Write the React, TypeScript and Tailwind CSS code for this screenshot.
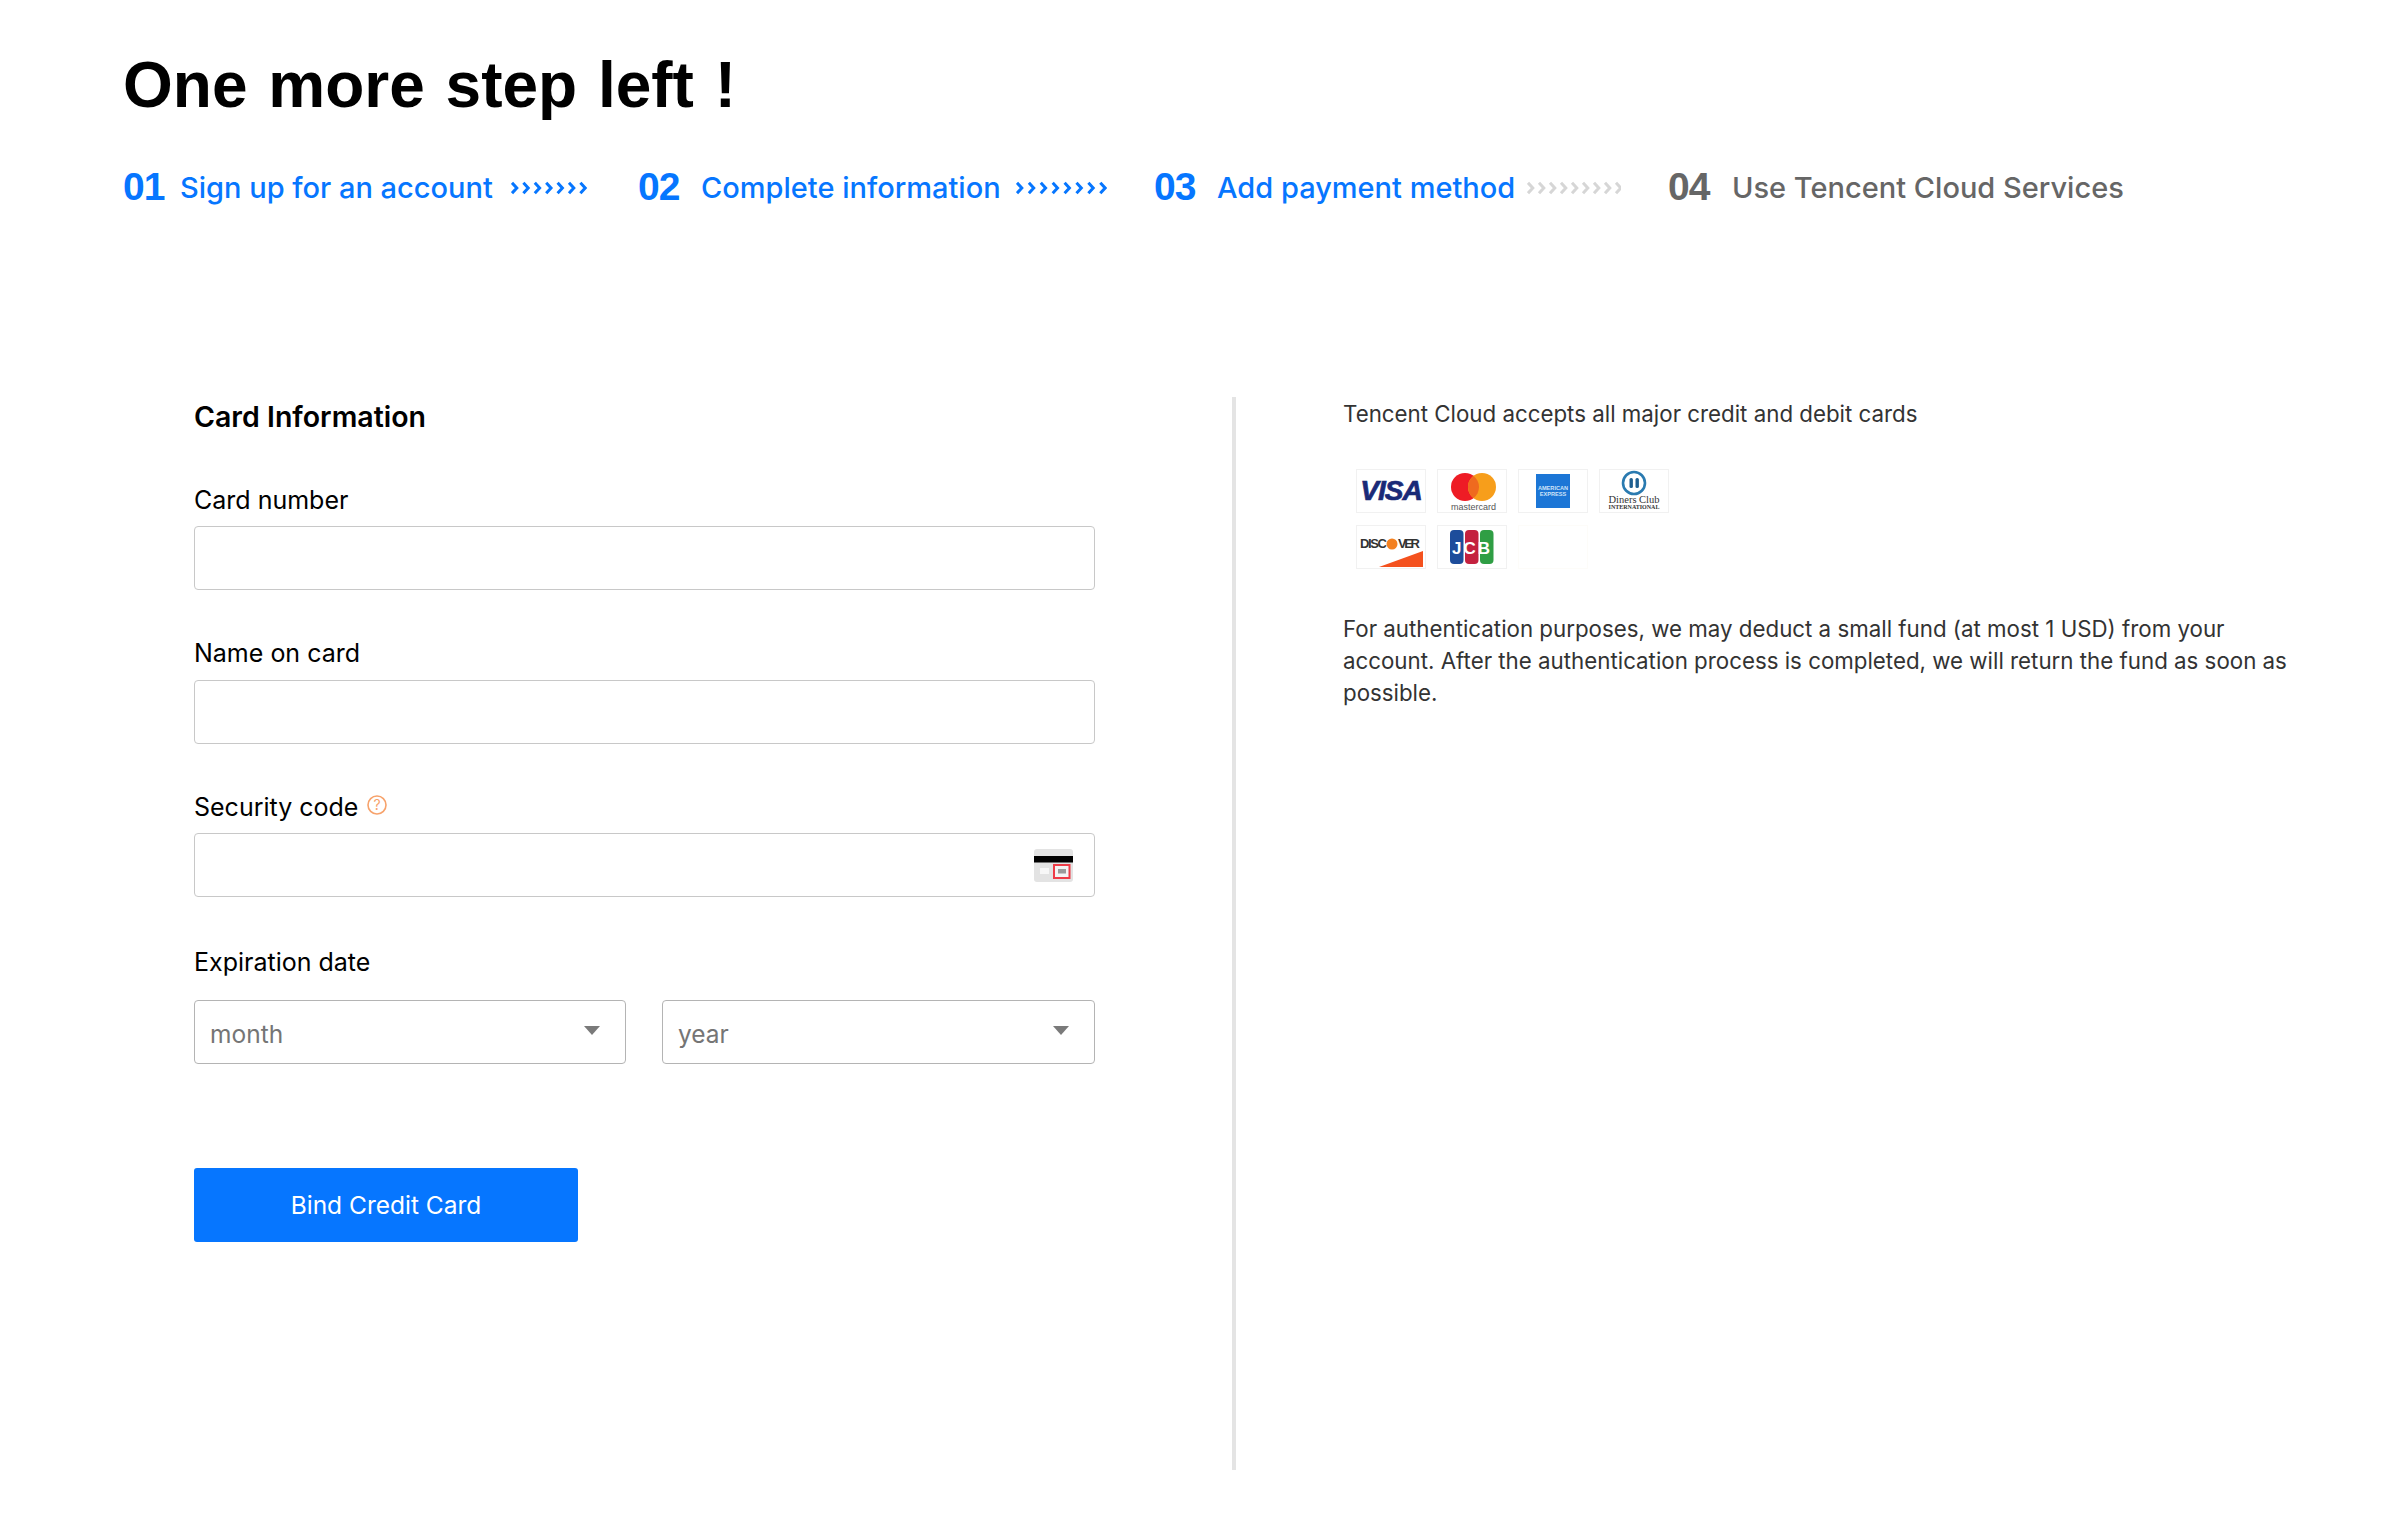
const sans = "font-['Inter','Liberation_Sans',sans-serif]";

function Chevrons({ count, color, width, step }: { count: number; color: string; width: number; step: number }) {
  return (
    <svg width={width} height={16} viewBox={`0 0 ${width} 16`} className="shrink-0" fill="none" stroke={color} strokeWidth={3}>
      {Array.from({ length: count }).map((_, i) => (
        <path key={i} d={`M${i * step + 1} 2.8 L${i * step + 5.8} 8 L${i * step + 1} 13.2`} />
      ))}
    </svg>
  );
}

function Step({ num, label, active, w, numW }: { num: string; label: string; active: boolean; w: string; numW: string }) {
  return (
    <div className={`flex items-baseline ${w} ${active ? "text-[#0676ff]" : "text-[#666666]"}`}>
      <span className={`${numW} shrink-0 translate-y-[1px] text-[39px] font-bold leading-[48px] tracking-[-1px] font-['Liberation_Sans',sans-serif]`}>{num}</span>
      <span className="-translate-y-[1px] text-[29px] font-medium leading-[48px] whitespace-nowrap">{label}</span>
    </div>
  );
}

function Field({ label, mt, children }: { label: React.ReactNode; mt: string; children: React.ReactNode }) {
  return (
    <div className={mt}>
      <div className="flex h-[34px] items-center text-[25px] leading-[34px] text-black">{label}</div>
      {children}
    </div>
  );
}

function TextBox({ children, mt = "mt-[9px]" }: { children?: React.ReactNode; mt?: string }) {
  return (
    <div className={`${mt} flex h-[64px] w-[901px] items-center justify-end rounded-[4px] border border-[#c8c8c8] bg-white pr-[21px]`}>
      {children}
    </div>
  );
}

function Select({ label, className }: { label: string; className: string }) {
  return (
    <div className={`flex h-[64px] items-center justify-between rounded-[4px] border border-[#b4b4b4] bg-white pl-[15px] pr-[25px] ${className}`}>
      <span className="text-[24.5px] text-[#757575] translate-y-[2px]">{label}</span>
      <svg width="16" height="9" viewBox="0 0 16 9" className="-translate-y-[2px]"><path d="M0 0H16L8 9Z" fill="#7a7a7a" /></svg>
    </div>
  );
}

function Badge({ children, faint }: { children?: React.ReactNode; faint?: boolean }) {
  return (
    <div className={`flex h-[44px] w-[70px] items-center justify-center overflow-hidden border bg-white ${faint ? "border-[#fdfcf9]" : "border-[#f1f1f1]"}`}>
      {children}
    </div>
  );
}

export default function App() {
  return (
    <div className={`min-h-[1530px] w-full bg-white pl-[123px] pt-[39px] ${sans}`}>
      <h1 className="text-[64px] font-bold leading-[92px] text-black font-['Liberation_Sans',sans-serif] [word-spacing:3px]">
        One more step left !
      </h1>

      <div className="mt-[31px] flex items-center">
        <Step num="01" label="Sign up for an account" active w="w-[388px]" numW="w-[57px]" />
        <Chevrons count={7} color="#0676ff" width={79} step={11.4} />
        <div className="w-[48px]" />
        <Step num="02" label="Complete information" active w="w-[378px]" numW="w-[63px]" />
        <Chevrons count={8} color="#0676ff" width={91} step={11.9} />
        <div className="w-[47px]" />
        <Step num="03" label="Add payment method" active w="w-[373px]" numW="w-[63px]" />
        <Chevrons count={9} color="#d6d6d6" width={94} step={11} />
        <div className="w-[47px]" />
        <Step num="04" label="Use Tencent Cloud Services" active={false} w="" numW="w-[64px]" />
      </div>

      <div className="mt-[184px] flex items-start">
        <div className="w-[1109px] pl-[71px] pt-[2px]">
          <div className="text-[28.5px] font-semibold leading-[36px] text-black">Card Information</div>

          <Field label="Card number" mt="mt-[48px]"><TextBox /></Field>
          <Field label="Name on card" mt="mt-[46px]"><TextBox mt="mt-[10px]" /></Field>
          <Field
            label={
              <span className="flex items-center gap-[9px]">
                Security code
                <svg width="20" height="20" viewBox="0 0 20 20" fill="none" className="-translate-y-[2px]">
                  <circle cx="10" cy="10" r="9" stroke="#f7a26b" strokeWidth="1.6" />
                  <text x="10" y="15" textAnchor="middle" fontSize="14" fill="#f7a26b" fontFamily="Inter">?</text>
                </svg>
              </span>
            }
            mt="mt-[46px]"
          >
            <TextBox>
              <svg width="39" height="33" viewBox="0 0 39 33">
                <rect x="0" y="0" width="39" height="33" rx="3" fill="#e3e3e3" />
                <rect x="0" y="7" width="39" height="6.5" fill="#000" />
                <rect x="6" y="19" width="9" height="6" fill="#f7f7f7" />
                <rect x="20" y="16" width="15.5" height="13" fill="#f4f4f4" stroke="#ee3b46" strokeWidth="2" />
                <rect x="24" y="20" width="8" height="4.5" fill="#9a9a9a" />
              </svg>
            </TextBox>
          </Field>

          <Field label="Expiration date" mt="mt-[48px]">
            <div className="mt-[21px] flex w-[901px] gap-[36px]">
              <Select label="month" className="w-[432px]" />
              <Select label="year" className="w-[433px]" />
            </div>
          </Field>

          <button className="mt-[104px] flex h-[74px] w-[384px] items-center justify-center rounded-[3px] bg-[#0676ff] pt-[1px] text-[24.5px] text-white">
            Bind Credit Card
          </button>
        </div>

        <div className="h-[1073px] w-[4px] bg-[#e4e4e4]" />

        <div className="ml-[107px] w-[950px] pt-[1px] text-[22.3px] leading-[32px] text-[#333333]">
          <div className="h-[32px]">Tencent Cloud accepts all major credit and debit cards</div>
          <div className="mt-[39px] ml-[13px] grid w-[315px] grid-cols-[70px_70px_70px_70px] gap-x-[11px] gap-y-[12px]">
            <Badge>
              <span className="text-[28px] font-bold italic leading-none tracking-[-1px] text-[#1a2a77] [-webkit-text-stroke:0.7px_#1a2a77] font-['Liberation_Sans',sans-serif]">VISA</span>
            </Badge>
            <Badge>
              <svg width="66" height="42" viewBox="0 0 66 42">
                <circle cx="26" cy="17" r="14" fill="#ee1c25" />
                <circle cx="43" cy="17" r="14" fill="#f79e1b" />
                <path d="M34.5 5.88A14 14 0 0 1 34.5 28.12A14 14 0 0 1 34.5 5.88Z" fill="#ef6a1f" />
                <text x="34.5" y="40" textAnchor="middle" fontSize="9" fill="#555" fontFamily="Liberation Sans">mastercard</text>
              </svg>
            </Badge>
            <Badge>
              <svg width="34" height="34" viewBox="0 0 34 34">
                <rect width="34" height="34" fill="#1c76d6" />
                <text x="17" y="16" textAnchor="middle" fontSize="5.6" fontWeight="bold" fill="#cfe3f8" fontFamily="Liberation Sans">AMERICAN</text>
                <text x="17" y="22" textAnchor="middle" fontSize="5.6" fontWeight="bold" fill="#cfe3f8" fontFamily="Liberation Sans">EXPRESS</text>
              </svg>
            </Badge>
            <Badge>
              <svg width="66" height="42" viewBox="0 0 66 42">
                <circle cx="33" cy="13" r="11" fill="#fff" stroke="#2a7ab0" strokeWidth="2.6" />
                <rect x="28.5" y="8" width="3.4" height="10" rx="1.5" fill="#1f5f90" />
                <rect x="34.5" y="8" width="3.4" height="10" rx="1.5" fill="#1f5f90" />
                <text x="33" y="33" textAnchor="middle" fontSize="10.5" fill="#333" fontFamily="Liberation Serif">Diners Club</text>
                <text x="33" y="39" textAnchor="middle" fontSize="6" fontWeight="bold" fill="#333" fontFamily="Liberation Serif">INTERNATIONAL</text>
              </svg>
            </Badge>
            <Badge>
              <svg width="68" height="42" viewBox="0 0 68 42">
                <text x="3" y="22" fontSize="13" fontWeight="bold" fill="#333" fontFamily="Liberation Sans" textLength="27">DISC</text>
                <circle cx="35" cy="18" r="5.5" fill="#f3801f" />
                <text x="41" y="22" fontSize="13" fontWeight="bold" fill="#333" fontFamily="Liberation Sans" textLength="22">VER</text>
                <path d="M22 41L66 25V41Z" fill="#f4511e" />
              </svg>
            </Badge>
            <Badge>
              <svg width="46" height="38" viewBox="0 0 46 38">
                <rect x="1" y="2" width="13.5" height="34" rx="4" fill="#1d4d9b" />
                <rect x="16" y="2" width="13.5" height="34" rx="4" fill="#c4213f" />
                <rect x="31" y="2" width="13.5" height="34" rx="4" fill="#2f9e44" />
                <text x="23" y="26" textAnchor="middle" fontSize="17" fontWeight="bold" fill="#fff" fontFamily="Liberation Sans" letterSpacing="2">JCB</text>
              </svg>
            </Badge>
            <Badge faint />
          </div>
          <p className="mt-[44px]">
            For authentication purposes, we may deduct a small fund (at most 1 USD) from your account. After the authentication process is completed, we will return the fund as soon as possible.
          </p>
        </div>
      </div>
    </div>
  );
}
